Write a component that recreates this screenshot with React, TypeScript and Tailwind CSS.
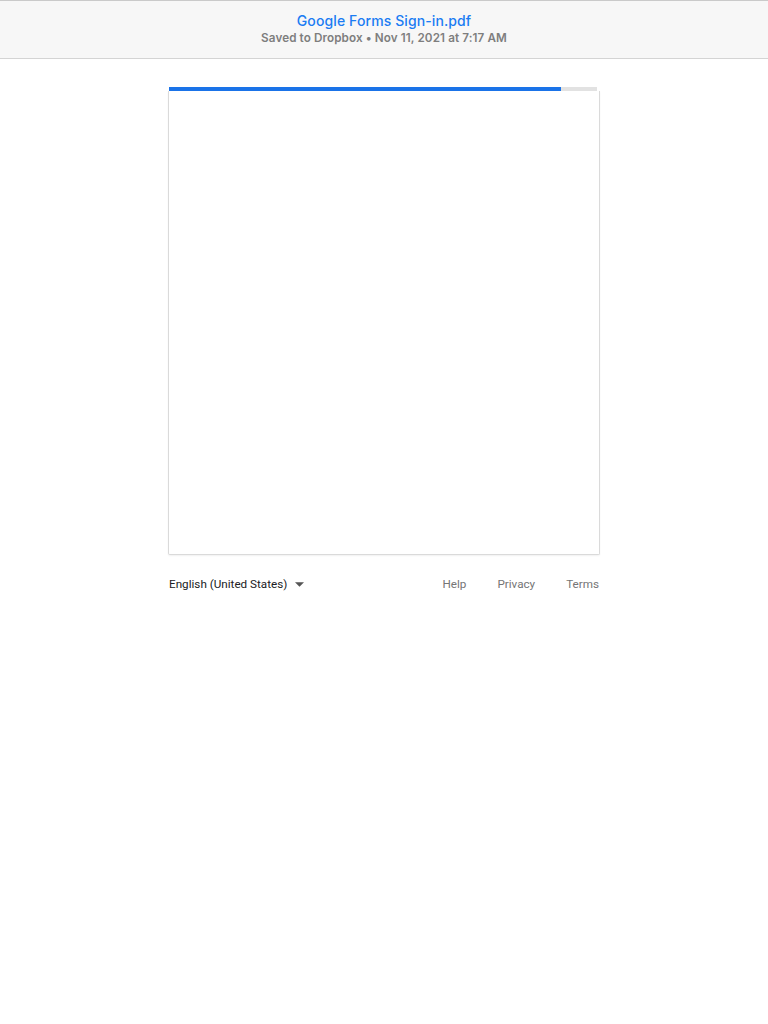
export default function App() {
  return (
    <div className="min-h-screen bg-white" style={{ fontFamily: 'Roboto, "Liberation Sans", sans-serif' }}>
      {/* top bar */}
      <header
        className="h-[59px] border-t border-b border-t-[#cacaca] border-b-[#d4d4d4] bg-[#f7f7f7] flex flex-col items-center pt-[11px]"
        style={{ fontFamily: 'Inter, "Liberation Sans", sans-serif' }}
      >
        <div className="text-[14px] leading-[18px] font-medium text-[#1b7cf3] tracking-[0.1px]">Google Forms Sign-in.pdf</div>
        <div className="text-[11.7px] leading-[16px] font-semibold text-[#7e7e7e] tracking-[0.1px]">
          Saved to Dropbox • Nov 11, 2021 at 7:17 AM
        </div>
      </header>

      <main className="w-[432px] mx-auto pt-[28px]">
        {/* card */}
        <div className="flex h-1 pr-[3px]">
          <div className="w-[392px] bg-[#1a73e8] ml-px" />
          <div className="flex-1 bg-[#e2e2e2]" />
        </div>
        <div className="h-[464px] border-x border-b border-[#dadada] rounded-b-[2px] shadow-[0_1px_2px_rgba(0,0,0,0.06)] bg-white" />

        {/* footer */}
        <div className="flex items-center justify-between mt-[21px] text-[11.7px] leading-[16px]">
          <button className="flex items-center gap-[8px] text-[#202124] ml-px">
            <span>English (United States)</span>
            <svg width="9" height="5" viewBox="0 0 10 5" className="mt-px">
              <path d="M0 0 L10 0 L5 5 Z" fill="#555" />
            </svg>
          </button>
          <div className="flex items-center text-[#757575] pr-px">
            <span>Help</span>
            <span className="ml-[31px]">Privacy</span>
            <span className="ml-[31px]">Terms</span>
          </div>
        </div>
      </main>
    </div>
  );
}
